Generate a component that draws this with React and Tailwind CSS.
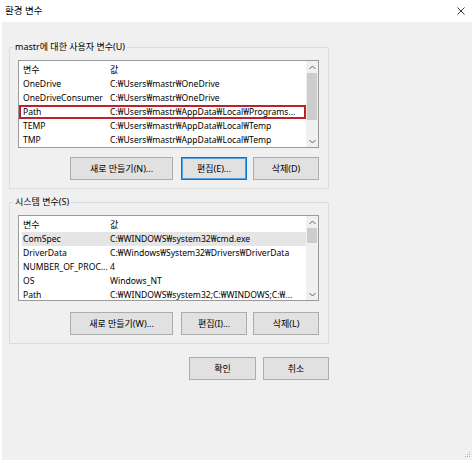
import React from "react";

const userRows = [
  ["OneDrive", "C:₩Users₩mastr₩OneDrive"],
  ["OneDriveConsumer", "C:₩Users₩mastr₩OneDrive"],
  ["Path", "C:₩Users₩mastr₩AppData₩Local₩Programs...", "mark"],
  ["TEMP", "C:₩Users₩mastr₩AppData₩Local₩Temp"],
  ["TMP", "C:₩Users₩mastr₩AppData₩Local₩Temp"],
];

const sysRows = [
  ["ComSpec", "C:₩WINDOWS₩system32₩cmd.exe", "sel"],
  ["DriverData", "C:₩Windows₩System32₩Drivers₩DriverData"],
  ["NUMBER_OF_PROC...", "4"],
  ["OS", "Windows_NT"],
  ["Path", "C:₩WINDOWS₩system32;C:₩WINDOWS;C:₩..."],
];

function Chevron({ up }) {
  return (
    <svg width="7" height="5" viewBox="0 0 7 5">
      <polyline
        points={up ? "0.5,4 3.5,1 6.5,4" : "0.5,1 3.5,4 6.5,1"}
        fill="none"
        stroke="#606060"
        strokeWidth="1"
      />
    </svg>
  );
}

function ScrollBar({ thumb }) {
  return (
    <div className="w-[12px] flex flex-col bg-[#f0f0f0]">
      <div className="h-[12px] flex items-center justify-center">
        <Chevron up />
      </div>
      <div className="flex-1 flex flex-col">
        <div className="mx-[1px] bg-[#cdcdcd]" style={{ height: thumb }} />
      </div>
      <div className="h-[12px] flex items-center justify-center">
        <Chevron />
      </div>
    </div>
  );
}

function Row({ name, value, kind }) {
  return (
    <div
      className={
        kind === "mark"
          ? "h-[14px] flex pl-[3px] shadow-[inset_0_0_0_2px_#c0202a]"
          : "h-[14px] flex pl-[3px]"
      }
    >
      <div
        className={
          kind === "sel"
            ? "flex-1 flex bg-[#e5e5e5] whitespace-nowrap overflow-hidden leading-[14px]"
            : "flex-1 flex whitespace-nowrap overflow-hidden leading-[14px]"
        }
      >
        <div className="w-[88px] pl-[1px] shrink-0 overflow-hidden">{name}</div>
        <div className="flex-1 overflow-hidden">{value}</div>
      </div>
    </div>
  );
}

function ListBox({ rows, height, thumb }) {
  return (
    <div
      className="w-[301px] ml-[8px] mt-[5px] border border-[#9a9a9a] bg-white flex text-[8.6px]"
      style={{ height }}
    >
      <div className="flex-1 overflow-hidden pt-[2px]">
        <div className="h-[14px] flex pl-[3px] leading-[14px]">
          <div className="w-[88px] pl-[1px] shrink-0 text-[9px]">변수</div>
          <div className="flex-1 text-[9px]">값</div>
        </div>
        {rows.map((r, i) => (
          <Row key={i} name={r[0]} value={r[1]} kind={r[2]} />
        ))}
      </div>
      <ScrollBar thumb={thumb} />
    </div>
  );
}

function Btn({ children, w, focus }) {
  return (
    <div
      className={
        focus
          ? "h-[23px] flex items-center justify-center bg-[#e1e1e1] border border-[#0078d7] shadow-[inset_0_0_0_1px_#5aa0e0]"
          : "h-[23px] flex items-center justify-center bg-[#e1e1e1] border border-[#adadad]"
      }
      style={{ width: w }}
    >
      {children}
    </div>
  );
}

export default function App() {
  return (
    <div className="w-[474px] h-[463px] bg-white flex flex-col text-black text-[9px] font-['Noto_Sans','Noto_Sans_CJK_KR',sans-serif] leading-[14px]">
      <div className="h-[22px] shrink-0 flex items-center justify-between pl-[5px] pr-[9px]">
        <span className="text-[9.5px]">환경 변수</span>
        <svg width="8" height="8" viewBox="0 0 8 8">
          <path d="M0.5 0.5 L7.5 7.5 M7.5 0.5 L0.5 7.5" stroke="#222" strokeWidth="0.9" />
        </svg>
      </div>
      <div className="mx-[2px] h-[438px] shrink-0 bg-[#f0f0f0] relative pt-[17px] pl-[7px]">
        <fieldset className="w-[320px] border border-[#dcdcdc] pb-[8px]">
          <legend className="ml-[3px] px-[2px] leading-[16px]">mastr에 대한 사용자 변수(U)</legend>
          <ListBox rows={userRows} height={88} thumb={47} />
          <div className="mt-[9px] pr-[9px] flex justify-end gap-[6px]">
            <div className="mr-[2px]">
              <Btn w={103}>새로 만들기(N)...</Btn>
            </div>
            <Btn w={66} focus>
              편집(E)...
            </Btn>
            <Btn w={66}>삭제(D)</Btn>
          </div>
        </fieldset>
        <fieldset className="w-[320px] border border-[#dcdcdc] pb-[8px] mt-[5px]">
          <legend className="ml-[3px] px-[2px] leading-[16px]">시스템 변수(S)</legend>
          <ListBox rows={sysRows} height={86} thumb={15} />
          <div className="mt-[11px] pr-[9px] flex justify-end gap-[6px]">
            <div className="mr-[2px]">
              <Btn w={103}>새로 만들기(W)...</Btn>
            </div>
            <Btn w={66}>편집(I)...</Btn>
            <Btn w={66}>삭제(L)</Btn>
          </div>
        </fieldset>
        <div className="w-[320px] mt-[13px] flex justify-end gap-[7px]">
          <Btn w={67}>확인</Btn>
          <Btn w={66}>취소</Btn>
        </div>
        <svg
          className="absolute right-[1px] bottom-[1px]"
          width="7"
          height="7"
          viewBox="0 0 7 7"
        >
          <rect x="5" y="0" width="1" height="1" fill="#b0b0b0" />
          <rect x="3" y="2" width="1" height="1" fill="#b0b0b0" />
          <rect x="5" y="2" width="1" height="1" fill="#b0b0b0" />
          <rect x="1" y="4" width="1" height="1" fill="#b0b0b0" />
          <rect x="3" y="4" width="1" height="1" fill="#b0b0b0" />
          <rect x="5" y="4" width="1" height="1" fill="#b0b0b0" />
        </svg>
      </div>
    </div>
  );
}
